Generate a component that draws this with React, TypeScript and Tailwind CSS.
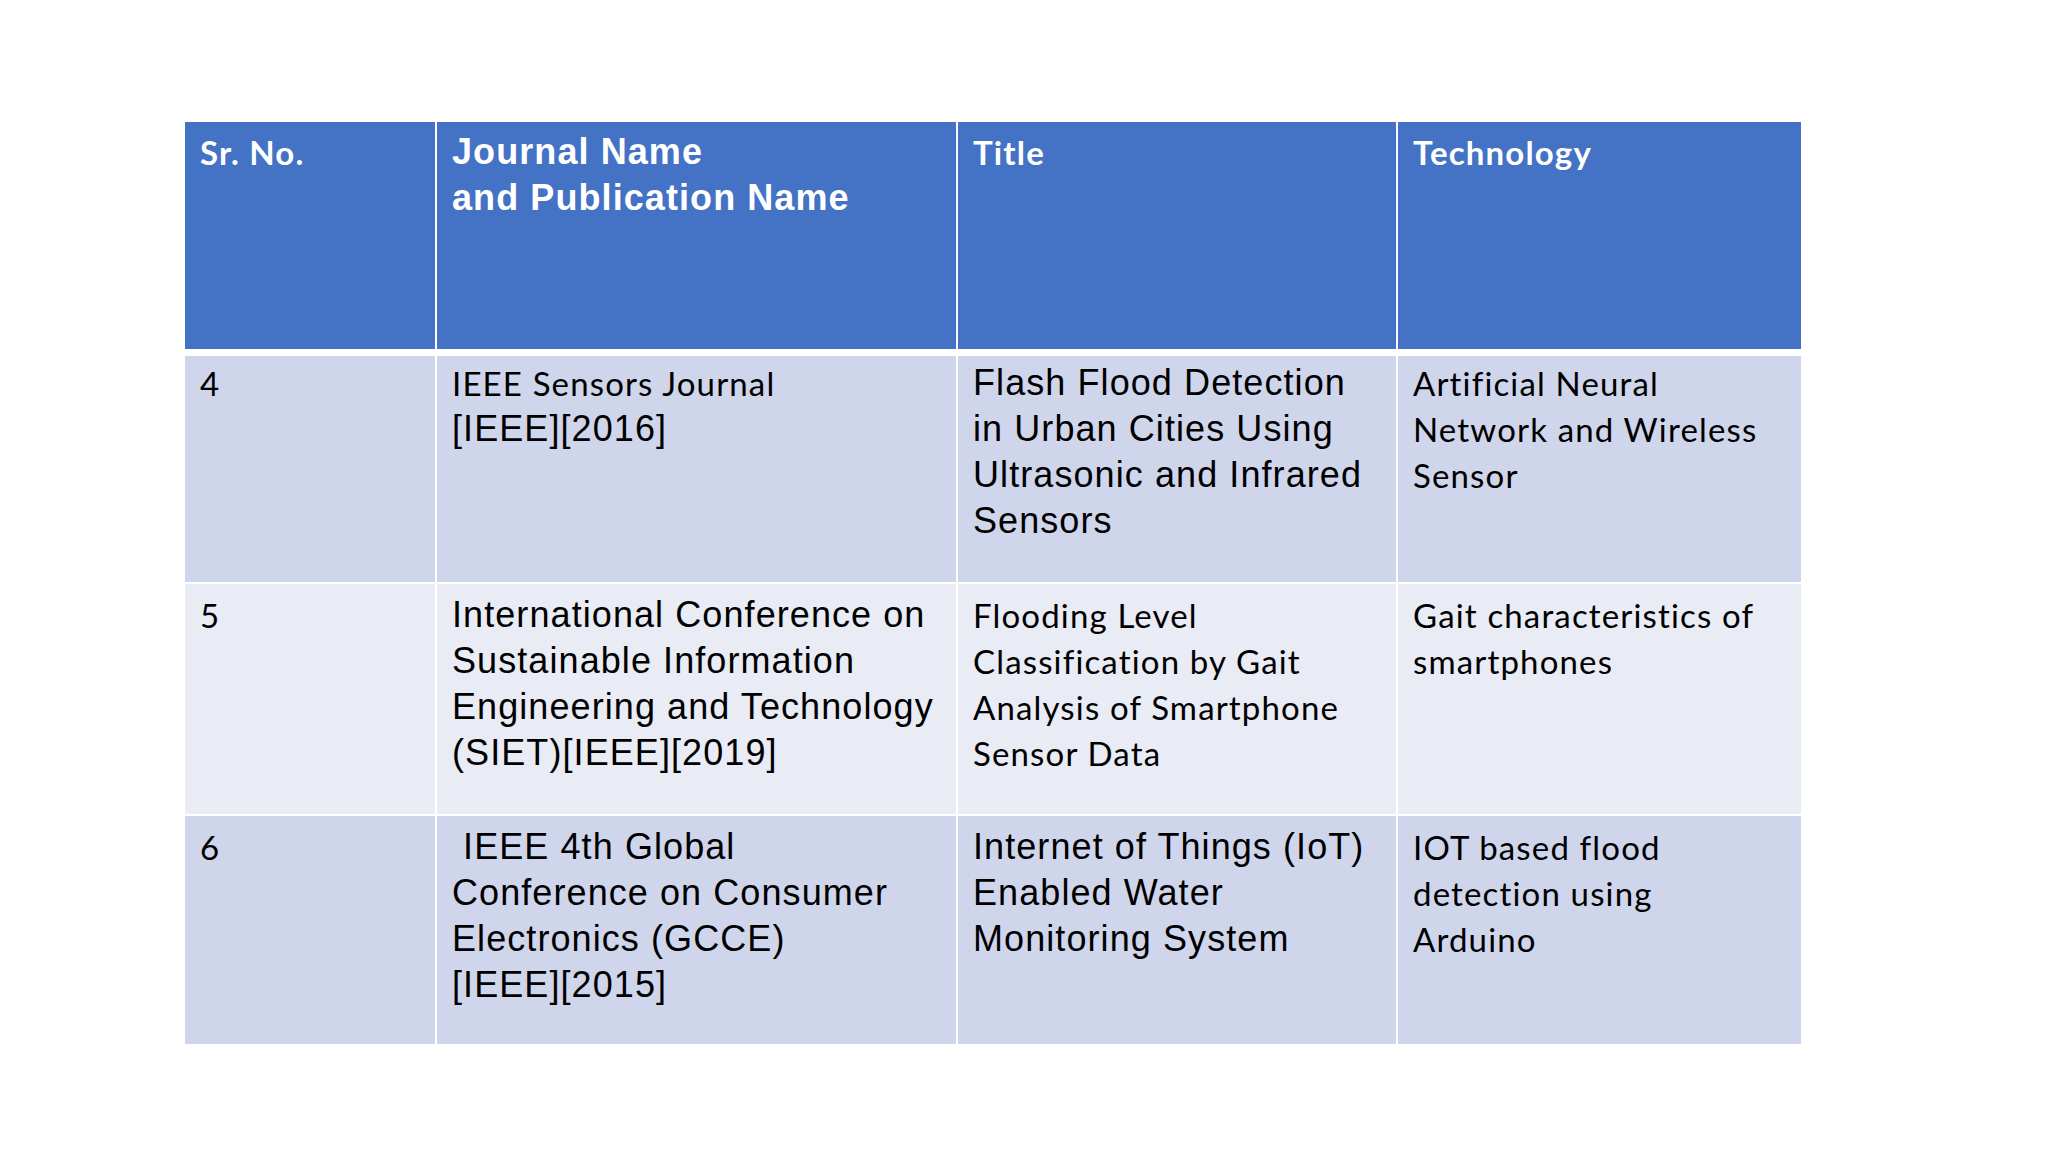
const arial = "font-['Liberation_Sans',Arial,sans-serif] text-[36px] tracking-[0.03em]";
const calibri = "font-['Lato','Liberation_Sans',sans-serif] text-[33px] tracking-[0.035em]";

type Line = { text: string; font: "a" | "c" };

function Cell({ lines, bg, head, pt }: { lines: Line[]; bg: string; head?: boolean; pt?: string }) {
  return (
    <div className={`${bg} ${head ? "pt-[7px] text-white font-bold" : `${pt} text-black`} pl-[15px] pr-2`}>
      {lines.map((l, i) => (
        <div
          key={i}
          className={`${l.font === "a" ? arial : calibri} leading-[46px] whitespace-pre`}
        >
          {l.text}
        </div>
      ))}
    </div>
  );
}

const a = (text: string): Line => ({ text, font: "a" });
const c = (text: string): Line => ({ text, font: "c" });

const rows: { bg: string; h: string; pt: string; cells: Line[][] }[] = [
  {
    bg: "bg-[#cfd5ea]",
    h: "h-[226px]",
    pt: "pt-[4px]",
    cells: [
      [c("4")],
      [c("IEEE Sensors Journal"), a("[IEEE][2016]")],
      [a("Flash Flood Detection"), a("in Urban Cities Using"), a("Ultrasonic and Infrared"), a("Sensors")],
      [c("Artificial Neural"), c("Network and Wireless"), c("Sensor")],
    ],
  },
  {
    bg: "bg-[#e9ebf5]",
    h: "h-[230px]",
    pt: "pt-[8px]",
    cells: [
      [c("5")],
      [
        a("International Conference on"),
        a("Sustainable Information"),
        a("Engineering and Technology"),
        a("(SIET)[IEEE][2019]"),
      ],
      [c("Flooding Level"), c("Classification by Gait"), c("Analysis of Smartphone"), c("Sensor Data")],
      [c("Gait characteristics of"), c("smartphones")],
    ],
  },
  {
    bg: "bg-[#cfd5ea]",
    h: "h-[228px]",
    pt: "pt-[8px]",
    cells: [
      [c("6")],
      [a(" IEEE 4th Global"), a("Conference on Consumer"), a("Electronics (GCCE)"), a("[IEEE][2015]")],
      [a("Internet of Things (IoT)"), a("Enabled Water"), a("Monitoring System")],
      [c("IOT based flood"), c("detection using"), c("Arduino")],
    ],
  },
];

export default function App() {
  const cols = "grid grid-cols-[250px_519px_438px_403px] gap-x-[2px]";
  return (
    <div className="w-[2048px] h-[1152px] bg-white pt-[122px] pl-[185px] overflow-hidden">
      <div className="w-[1616px] bg-white flex flex-col">
        <div className={`${cols} h-[227px]`}>
          <Cell head bg="bg-[#4472c4]" lines={[c("Sr. No.")]} />
          <Cell head bg="bg-[#4472c4]" lines={[a("Journal Name"), a("and Publication Name")]} />
          <Cell head bg="bg-[#4472c4]" lines={[c("Title")]} />
          <Cell head bg="bg-[#4472c4]" lines={[c("Technology")]} />
        </div>
        <div className="h-[7px]" />
        <div className="flex flex-col gap-y-[2px]">
          {rows.map((r, i) => (
            <div key={i} className={`${cols} ${r.h}`}>
              {r.cells.map((lines, j) => (
                <Cell key={j} bg={r.bg} pt={r.pt} lines={lines} />
              ))}
            </div>
          ))}
        </div>
      </div>
    </div>
  );
}
